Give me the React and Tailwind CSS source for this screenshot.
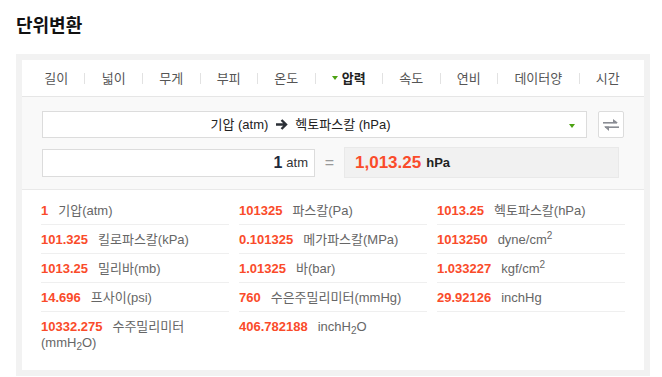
import React from "react";

const tabs = ["길이", "넓이", "무게", "부피", "온도", "압력", "속도", "연비", "데이터양", "시간"];

const Sup = ({ children }) => <sup className="text-[10px] leading-none">{children}</sup>;
const Sub = ({ children }) => <sub className="text-[10px] leading-none">{children}</sub>;

const results = [
  ["1", <>기압(atm)</>],
  ["101325", <>파스칼(Pa)</>],
  ["1013.25", <>헥토파스칼(hPa)</>],
  ["101.325", <>킬로파스칼(kPa)</>],
  ["0.101325", <>메가파스칼(MPa)</>],
  ["1013250", <>dyne/cm<Sup>2</Sup></>],
  ["1013.25", <>밀리바(mb)</>],
  ["1.01325", <>바(bar)</>],
  ["1.033227", <>kgf/cm<Sup>2</Sup></>],
  ["14.696", <>프사이(psi)</>],
  ["760", <>수은주밀리미터(mmHg)</>],
  ["29.92126", <>inchHg</>],
  ["10332.275", <>수주밀리미터</>, <>(mmH<Sub>2</Sub>O)</>],
  ["406.782188", <>inchH<Sub>2</Sub>O</>],
];

const SwapIcon = () => (
  <svg width="16" height="12" viewBox="0 0 16 12" fill="#8a8d94">
    <rect x="0" y="3" width="14" height="1.6" />
    <polygon points="10,0 15,3.8 10,3.8" />
    <rect x="2" y="7.4" width="14" height="1.6" />
    <polygon points="6,12 1,7.4 6,7.4" />
  </svg>
);

const Arrow = () => (
  <svg width="13" height="11" viewBox="0 0 13 11" className="mx-[7px]">
    <path d="M1 5.5H11M6.5 1L11 5.5L6.5 10" fill="none" stroke="#2b2f36" strokeWidth="2.4" />
  </svg>
);

export default function App() {
  return (
    <div className="w-[662px] h-[377px] bg-white font-['Liberation_Sans','Noto_Sans_CJK_KR',sans-serif] text-[#333]">
      <h1 className="pl-[16px] pt-[13px] text-[18px] font-bold text-[#111] leading-[26px]">단위변환</h1>
      <div className="ml-[16px] mt-[15px] w-[634px] bg-[#f2f2f2] p-[6px]">
        <div className="bg-white">
          {/* tabs */}
          <div className="flex justify-center items-center h-[37px] border-b border-[#e6e6e6] pr-[2px]">
            {tabs.map((t, i) => (
              <div key={t} className={"flex items-center " + (i > 0 ? "border-l border-[#e2e2e2]" : "")}>
                <span
                  className={
                    "px-[16.3px] my-[-1px] text-[13px] leading-[13px] flex items-center " +
                    (t === "압력" ? "font-bold text-[#222]" : "text-[#555]")
                  }
                >
                  {t === "압력" && (
                    <span className="mr-[4px] w-0 h-0 border-l-[3.5px] border-r-[3.5px] border-t-[4px] border-l-transparent border-r-transparent border-t-[#4ca212]" />
                  )}
                  {t}
                </span>
              </div>
            ))}
          </div>

          {/* converter */}
          <div className="bg-[#f9f9f9] border-b border-[#e9e9e9] px-[20px] pt-[14px] pb-[11px]">
            <div className="flex gap-[11px]">
              <div className="relative flex-1 h-[27px] bg-white border border-[#dcdcdc] flex items-center justify-center pr-[28px] text-[13px] text-[#222]">
                <span>기압 (atm)</span>
                <Arrow />
                <span>헥토파스칼 (hPa)</span>
                <span className="absolute right-[11px] top-[12px] w-0 h-0 border-l-[3.5px] border-r-[3.5px] border-t-[4px] border-l-transparent border-r-transparent border-t-[#4ca212]" />
              </div>
              <div className="w-[26px] h-[27px] bg-white border border-[#dcdcdc] rounded-[2px] flex items-center justify-center">
                <SwapIcon />
              </div>
            </div>
            <div className="flex items-center mt-[9px]">
              <div className="w-[273px] h-[28px] bg-white border border-[#dcdcdc] flex items-center justify-end pr-[6px]">
                <span className="text-[16px] font-bold text-[#1e2a3c]">1</span>
                <span className="ml-[4px] text-[13px] text-[#333]">atm</span>
              </div>
              <span className="w-[29px] text-center text-[16px] text-[#999]">=</span>
              <div className="w-[275px] h-[31px] bg-[#f1f1f1] border border-[#e9e9e9] flex items-center pl-[10px]">
                <span className="text-[17px] font-bold text-[#fa4b2a]">1,013.25</span>
                <span className="ml-[5px] text-[13px] font-bold text-[#222]">hPa</span>
              </div>
            </div>
          </div>

          {/* results */}
          <div className="grid grid-cols-3 gap-x-[10px] px-[19px] pt-[6px] pb-[19px]">
            {results.map(([n, label, line2], i) => {
              const last = i >= 12;
              return (
                <div
                  key={i}
                  className={
                    "text-[13px] " +
                    (last ? "pt-[7px] leading-[16px]" : "h-[29px] leading-[15px] border-b border-[#efefef] flex items-center")
                  }
                >
                  <div>
                    <span className="font-bold text-[#fa4b2a] mr-[10px]">{n}</span>
                    <span className="text-[#666]">{label}</span>
                  </div>
                  {line2 && <div className="text-[#666]">{line2}</div>}
                </div>
              );
            })}
          </div>
        </div>
      </div>
    </div>
  );
}
